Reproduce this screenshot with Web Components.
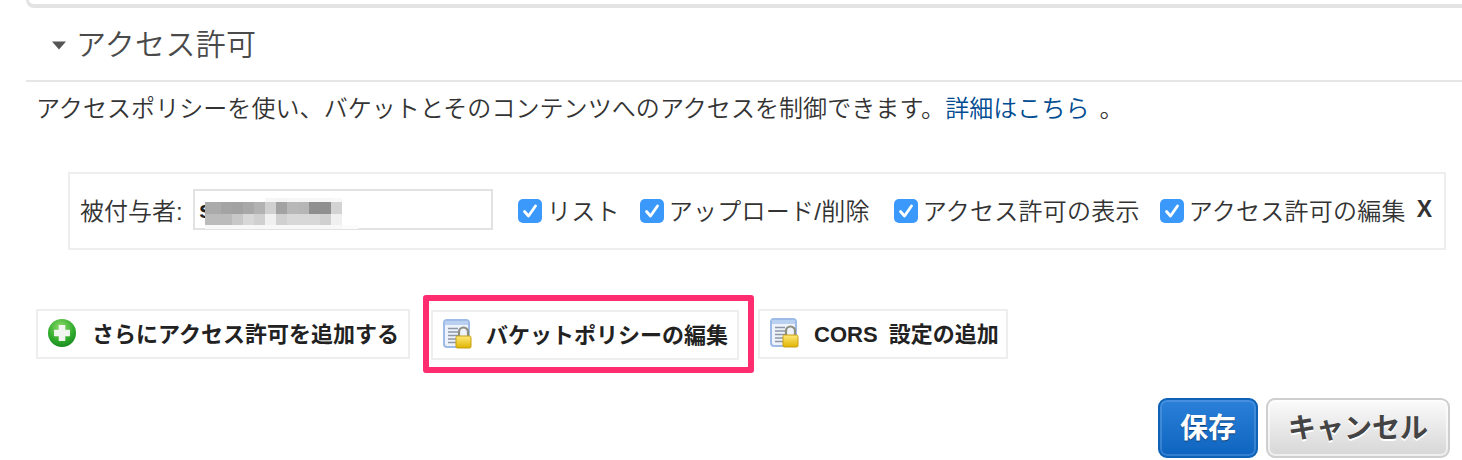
<!DOCTYPE html>
<html lang="ja"><head><meta charset="utf-8"><title>アクセス許可</title>
<style>
html,body{margin:0;padding:0;background:#fff;width:1462px;height:460px;overflow:hidden}
body{font-family:"Liberation Sans","Noto Sans CJK JP",sans-serif;color:#333}
</style></head><body>
<access-panel>
  <section-head slot="head">アクセス許可</section-head>
  <span slot="intro">アクセスポリシーを使い、バケットとそのコンテンツへのアクセスを制御できます。<a-link>詳細はこちら</a-link><span style="margin-left:10px">。</span></span>
  <grant-row slot="grant">
    <check-item>リスト</check-item>
    <check-item style="margin-left:20px">アップロード/削除</check-item>
    <check-item style="margin-left:24px">アクセス許可の表示</check-item>
    <check-item style="margin-left:20px">アクセス許可の編集</check-item>
  </grant-row>
  <tool-button slot="tools" icon="plus" w="374" gap="14">さらにアクセス許可を追加する</tool-button>
  <pink-box slot="tools"><tool-button icon="policy" w="308" gap="13">バケットポリシーの編集</tool-button></pink-box>
  <tool-button slot="tools" icon="policy" w="250" gap="14">CORS 設定の追加</tool-button>
  <action-button slot="actions" kind="primary">保存</action-button>
  <action-button slot="actions">キャンセル</action-button>
</access-panel>
<script>
function def(name,html){
  customElements.define(name,class extends HTMLElement{
    connectedCallback(){
      if(this.shadowRoot)return;
      const r=this.attachShadow({mode:'open'});
      r.innerHTML=typeof html==='function'?html(this):html;
    }
  });
}
def('access-panel',`<style>
:host{display:flex;flex-direction:column;width:1462px;height:460px;box-sizing:border-box;padding-left:26px}
.top{height:8px;box-sizing:border-box;border:solid #e3e3e3;border-width:0 0 4px 3px;border-bottom-left-radius:10px}
.head{height:74px;box-sizing:border-box;border-bottom:2px solid #e6e6e6;padding:2px 0 0 25px;display:flex;align-items:center}
.intro{margin:10px 0 0 10px;font-size:24px;line-height:34px;letter-spacing:.07px;color:#333;font-weight:350;white-space:nowrap}
.grant{margin:46px 0 0 42px}
.tools{margin:45px 0 0 10px;display:flex;align-items:center}
.actions{margin:25px 12px 0 0;display:flex;justify-content:flex-end;gap:8px}
</style>
<div class="top"></div>
<div class="head"><slot name="head"></slot></div>
<div class="intro"><slot name="intro"></slot></div>
<div class="grant"><slot name="grant"></slot></div>
<div class="tools"><slot name="tools"></slot></div>
<div class="actions"><slot name="actions"></slot></div>`);
def('section-head',`<style>
:host{display:flex;align-items:center;font-size:30px;letter-spacing:.3px;color:#4a4a4a;font-weight:350;line-height:40px}
svg{margin-right:9px;margin-top:0}
</style><svg width="16" height="9" viewBox="0 0 16 9"><path d="M1 0.500h14L8 8.500z" fill="#555"/></svg><slot></slot>`);
def('a-link',`<style>:host{display:inline;color:#004b91}</style><slot></slot>`);
const cols=[16,11,11,11,11,11,11,11,11,11,11,11,16];
const W='#fff',F='#f8f8f8';
const mos=[
[W,W,W,W,W,'#f6f6f6','#f4f4f4','#f6f6f6','#f6f6f6','#f6f6f6','#f6f6f6','#f8f8f8',W],
['#aaa','#a4a4a4','#a2a2a2','#a8a8a8','#b2b2b2','#d0d0d0','#a2a2a2','#b8b8b8','#b6b6b6','#8f8f8f','#8f8f8f','#d3d3d3',W],
['#bbb','#bbb','#c8c8c8','#d8d8d8','#d0d0d0','#f0f0f0','#d0d0d0','#d8d8d8','#d8d8d8','#d8d8d8','#d0d0d0','#f0f0f0',W],
[F,F,F,F,F,F,F,F,F,F,F,F,'#fcfcfc']];
def('grant-row',()=>`<style>
:host{display:flex;align-items:center;box-sizing:border-box;width:1378px;height:78px;border:2px solid #eee;padding-left:10px;font-size:24px;color:#333;font-weight:350;white-space:nowrap}
.lab{width:113px;flex:none;margin-top:-4px}
.inp{position:relative;box-sizing:border-box;width:300px;height:41px;border:2px solid #e2e2e2;background:#fff;margin:-3px 25px 0 0;font:bold 24px/37px "Liberation Sans",sans-serif;padding-left:4px;color:#222;flex:none}
.mos{position:absolute;left:10px;top:7px;display:grid;grid-template-columns:${cols.map(c=>c+'px').join(' ')};grid-template-rows:4px 12px 11px 4px}
.x{font:bold 23px "Liberation Sans",sans-serif;margin:-4px 0 0 11px;color:#333}
</style><span class="lab">被付与者:</span><div class="inp">s<div class="mos">${mos.flat().map(c=>`<i style="background:${c}"></i>`).join('')}</div></div><slot></slot><span class="x">X</span>`);
def('check-item',`<style>
:host{display:inline-flex;align-items:center;font-size:24px;line-height:34px;letter-spacing:.25px;flex:none;padding-bottom:2px}
svg{margin-right:5px;flex:none;margin-top:1px}
.t{display:block;margin-top:3px}
</style><svg width="24" height="24" viewBox="0 0 24 24"><rect width="24" height="24" rx="5" fill="#3b99fc"/><path d="M6.500 12.500l4 4.500 7-10" fill="none" stroke="#fff" stroke-width="2.800" stroke-linecap="round" stroke-linejoin="round"/></svg><span class="t"><slot></slot></span>`);
const ICONS={
plus:`<svg width="28" height="28" viewBox="0 0 30 30" style="display:block"><defs><radialGradient id="g" cx=".45" cy=".3" r=".8"><stop offset="0" stop-color="#8fdc6a"/><stop offset=".6" stop-color="#2faa2c"/><stop offset="1" stop-color="#0f7f1c"/></radialGradient></defs><circle cx="15" cy="15" r="15" fill="url(#g)"/><path d="M11.500 6.500h7v5h5v7h-5v5h-7v-5h-5v-7h5z" fill="#f2f6f0"/></svg>`,
policy:`<svg width="30" height="30" viewBox="0 0 30 30" style="display:block"><defs><linearGradient id="l" x1="0" x2="0" y1="0" y2="1"><stop offset="0" stop-color="#ffe97a"/><stop offset="1" stop-color="#e0b400"/></linearGradient></defs><rect x="1" y="1" width="25" height="27" rx="3" fill="#eef3fb" stroke="#9dbbe6" stroke-width="2"/><rect x="2" y="2" width="23" height="4" fill="#b9d0f0"/><path d="M5 9.500h10M5 13h10M5 16.500h12M5 20h10M5 23.500h9" stroke="#8b96a6" stroke-width="1.700"/><path d="M16 17v-4a4.500 4.500 0 0 1 9 0v4" fill="none" stroke="#8d8d80" stroke-width="2.200"/><rect x="13" y="17" width="15" height="12" rx="1.500" fill="url(#l)" stroke="#c79f10"/></svg>`};
def('tool-button',h=>`<style>
:host{display:flex;align-items:center;box-sizing:border-box;width:${h.getAttribute('w')}px;height:50px;border:2px solid #eee;background:#fff;padding:0 0 0 10px;font-size:22px;font-weight:700;color:#222;white-space:nowrap;flex:none;word-spacing:5px}
.i{width:30px;margin:-2px ${h.getAttribute('gap')}px 0 0;flex:none;display:block}
.t{display:block;margin-top:-5px}
</style><span class="i">${ICONS[h.getAttribute('icon')]}</span><span class="t"><slot></slot></span>`);
def('pink-box',`<style>
:host{display:block;box-sizing:border-box;width:331px;height:78px;border:6px solid #ff2d6f;border-radius:3px;padding:9px 0 0 2px;margin:0 4px 0 13px;flex:none}
</style><slot></slot>`);
def('action-button',h=>{const p=h.getAttribute('kind')==='primary';return `<style>
:host{display:flex;align-items:center;justify-content:center;box-sizing:border-box;height:60px;padding-bottom:4px;width:${p?100:184}px;border-radius:9px;font-size:28px;font-weight:700;
${p?'color:#fff;border:2px solid #0e63b8;background:linear-gradient(#2b80d8,#0f64bf);box-shadow:inset 0 0 0 2px rgba(120,175,235,.35);text-shadow:0 1px 1px rgba(0,0,0,.45)':'color:#444;border:2px solid #cfcfcf;background:linear-gradient(#fbfbfb,#d6d6d6);box-shadow:inset 0 0 0 2px rgba(255,255,255,.6);text-shadow:0 2px 0 #fff'}}
</style><slot></slot>`});
</script>
</body></html>
